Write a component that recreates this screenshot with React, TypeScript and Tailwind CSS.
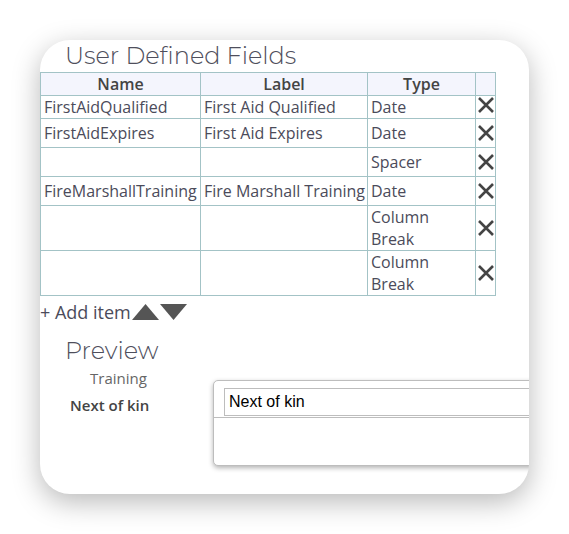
interface FieldRow {
  name: string;
  label: string;
  type: string[];
  height: string;
}

const rows: FieldRow[] = [
  { name: 'FirstAidQualified', label: 'First Aid Qualified', type: ['Date'], height: 'h-[23px]' },
  { name: 'FirstAidExpires', label: 'First Aid Expires', type: ['Date'], height: 'h-[29px]' },
  { name: '', label: '', type: ['Spacer'], height: 'h-[29px]' },
  { name: 'FireMarshallTraining', label: 'Fire Marshall Training', type: ['Date'], height: 'h-[29px]' },
  { name: '', label: '', type: ['Column', 'Break'], height: 'h-[45px]' },
  { name: '', label: '', type: ['Column', 'Break'], height: 'h-[44px]' },
];

const heading = "font-['Montserrat','Open_Sans',sans-serif] font-light text-[24px] text-[#4f4f5c]";
const cell = 'border border-[#a3c3c6] px-[3px] leading-[22px]';

function RemoveIcon() {
  return (
    <svg width="18" height="18" viewBox="0 0 18 18" className="mx-auto block">
      <path d="M2 2 L16 16 M16 2 L2 16" stroke="#444" strokeWidth="2.6" fill="none" />
    </svg>
  );
}

export default function App() {
  return (
    <div className="min-h-screen bg-white p-[40px] font-['Open_Sans',sans-serif]">
      <div className="h-[454px] w-[489px] overflow-hidden rounded-[30px] bg-white shadow-[0_8px_28px_rgba(0,0,0,0.28)]">
        {/* Fields */}
        <h2 className={`${heading} h-[32px] pl-[25px] leading-[32px]`}>User Defined Fields</h2>
        <table className="w-[455px] table-fixed border-collapse text-[16px] text-[#4b4b5a]">
          <colgroup>
            <col className="w-[160px]" />
            <col className="w-[167px]" />
            <col className="w-[108px]" />
            <col className="w-[20px]" />
          </colgroup>
          <thead>
            <tr className="h-[23px] bg-[#f4f5fd] text-[#444]">
              <th className={`${cell} text-center font-semibold`}>Name</th>
              <th className={`${cell} text-center font-semibold`}>Label</th>
              <th className={`${cell} text-center font-semibold`}>Type</th>
              <th className={cell}></th>
            </tr>
          </thead>
          <tbody>
            {rows.map((row, i) => {
              const align = i === 0 ? 'align-top leading-[16px]' : 'align-middle';
              return (
                <tr key={i} className={row.height}>
                  <td className={`${cell} ${align} whitespace-nowrap`}>{row.name}</td>
                  <td className={`${cell} ${align} whitespace-nowrap`}>{row.label}</td>
                  <td className={`${cell} ${align}`}>
                    {row.type.map((t) => (
                      <div key={t}>{t}</div>
                    ))}
                  </td>
                  <td className={`border border-[#a3c3c6] p-0 ${i === 0 ? 'align-top' : 'align-middle'}`}>
                    <RemoveIcon />
                  </td>
                </tr>
              );
            })}
          </tbody>
        </table>

        {/* Add / reorder */}
        <div className="mt-[6px] flex h-[20px] items-center text-[18px] text-[#4b4b5a]">
          <span className="leading-[20px]">+ Add item</span>
          <svg width="28" height="17" viewBox="0 0 28 17" className="ml-[1px]">
            <polygon points="0,16 13.5,0 27,16" fill="#555" />
          </svg>
          <svg width="28" height="17" viewBox="0 0 28 17">
            <polygon points="0,0 27,0 13.5,16" fill="#555" />
          </svg>
        </div>

        {/* Preview */}
        <h2 className={`${heading} mt-[13px] h-[32px] pl-[25px] leading-[32px]`}>Preview</h2>
        <div className="flex">
          <div className="w-[173px] shrink-0 pt-[1px]">
            <div className="pl-[50px] text-[15px] leading-[20px] text-[#666]">Training</div>
            <div className="pl-[30px] pt-[7px] text-[15px] font-semibold leading-[20px] text-[#444]">Next of kin</div>
          </div>
          <div className="mt-[13px] h-[86px] w-[330px] shrink-0 rounded-[5px] border border-[#bdbdbd] bg-white shadow-[0_2px_5px_rgba(0,0,0,0.3)]">
            <div className="border-b border-[#bdbdbd] px-[10px] pt-[7px] pb-[1px]">
              <div className="h-[28px] border border-[#bdbdbd] px-[4px] font-['Liberation_Sans',Arial,sans-serif] text-[16px] leading-[26px] text-black">
                Next of kin
              </div>
            </div>
          </div>
        </div>
      </div>
    </div>
  );
}
